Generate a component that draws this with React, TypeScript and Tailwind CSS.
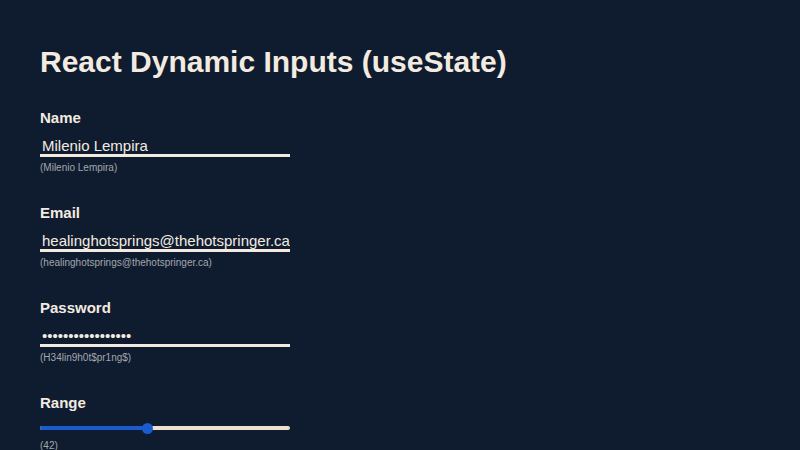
import React, { useState } from "react";

function Field({
  label,
  type,
  value,
  onChange,
}: {
  label: string;
  type: string;
  value: string;
  onChange: (v: string) => void;
}) {
  return (
    <div className="flex flex-col">
      <label className="text-[15px] leading-[20px] font-bold text-[#f3ebe0]">{label}</label>
      <input
        type={type}
        value={value}
        onChange={(e) => onChange(e.target.value)}
        className="mt-[5px] w-[250px] h-[24px] bg-transparent border-0 border-b-[3px] border-[#f3ebe0] pl-[2px] pt-[4px] pb-0 text-[15px] text-[#f3ebe0] outline-none font-['Liberation_Sans',Arial,sans-serif]"
      />
      <span className="mt-[4px] text-[10px] leading-[14px] text-[#a3a7ad]">({value})</span>
    </div>
  );
}

export default function App() {
  const [name, setName] = useState("Milenio Lempira");
  const [email, setEmail] = useState("healinghotsprings@thehotspringer.ca");
  const [pw, setPw] = useState("H34lin9h0t$pr1ng$");
  const [range] = useState(42);

  return (
    <div className="w-[800px] h-[450px] overflow-hidden bg-[#0f1c2f] pl-[40px] pt-[44px] font-['Liberation_Sans',Arial,sans-serif]">
      <h1 className="text-[30px] leading-[36px] font-bold text-[#f3ebe0]">React Dynamic Inputs (useState)</h1>
      <div className="mt-[28px] flex flex-col gap-[28px]">
        <Field label="Name" type="text" value={name} onChange={setName} />
        <Field label="Email" type="email" value={email} onChange={setEmail} />
        <Field label="Password" type="password" value={pw} onChange={setPw} />
        <div className="flex flex-col">
          <label className="text-[15px] leading-[20px] font-bold text-[#f3ebe0]">Range</label>
          <div className="mt-[9px] relative w-[250px] h-[12px] flex items-center">
            <div className="w-full h-[4px] rounded-full bg-[#ede0cf] flex">
              <div className="h-full rounded-full bg-[#1a5ccf]" style={{ width: `${range + 1}%` }} />
            </div>
            <div
              className="absolute top-[0.5px] w-[11px] h-[11px] rounded-full bg-[#1a5ccf]"
              style={{ left: `calc(${range}% - 3.5px)` }}
            />
          </div>
          <span className="mt-[5px] text-[10px] leading-[14px] text-[#a3a7ad]">({range})</span>
        </div>
      </div>
    </div>
  );
}
